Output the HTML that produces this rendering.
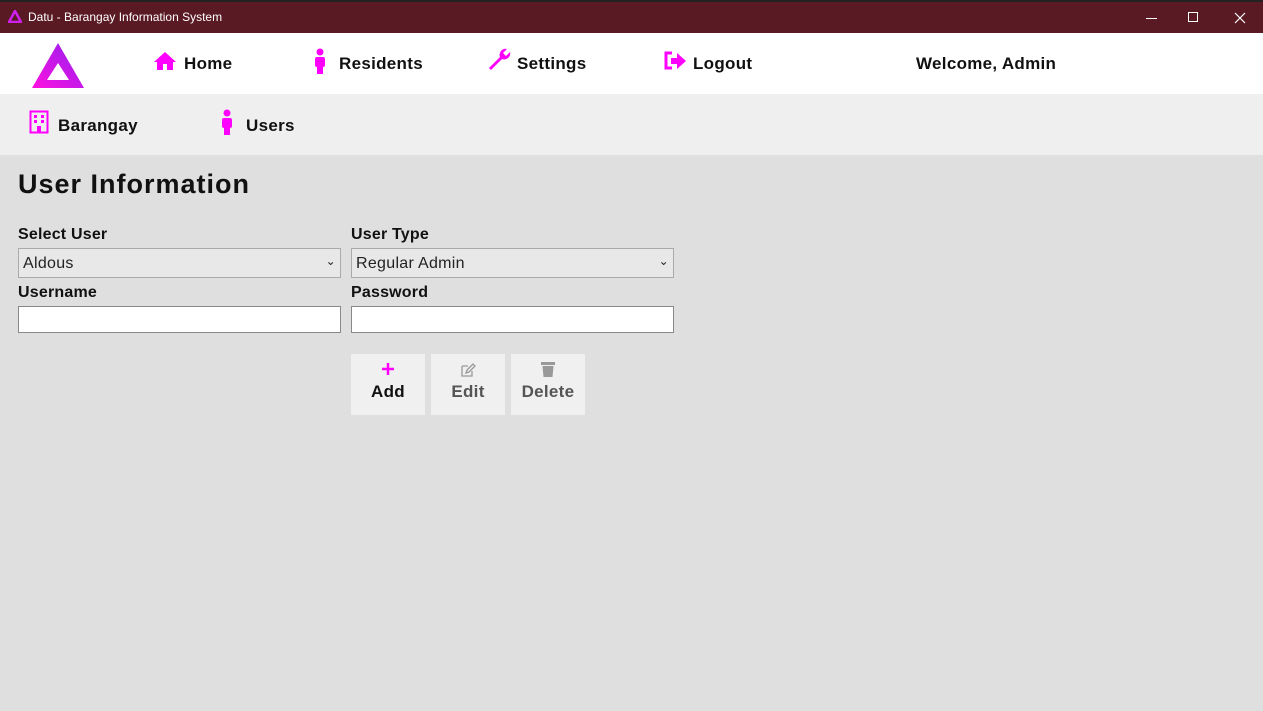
<!DOCTYPE html>
<html><head><style>
*{margin:0;padding:0;box-sizing:border-box}
body{width:1263px;height:711px;overflow:hidden;background:#dfdfdf;font-family:"Liberation Sans",sans-serif;position:relative}
.tb{position:absolute;left:0;top:0;width:1263px;height:33px;background:#5a1a24;border-top:2px solid #222;color:#fff;font-size:12px}
.a{position:absolute;white-space:nowrap}
.nav{position:absolute;top:33px;left:0;width:1263px;height:61px;background:#fff}
.sub{position:absolute;top:94px;left:0;width:1263px;height:61px;background:#efefef}
.n{font-size:17px;font-weight:bold;color:#111;letter-spacing:0.3px}
.lbl{font-size:16px;font-weight:bold;color:#111;letter-spacing:0.2px}
.sel{position:absolute;height:30px;width:323px;border:1px solid #aaa;background:#e8e8e8;font-size:16px;padding:6px 4px;color:#222;letter-spacing:0.3px}
.inp{position:absolute;height:27px;width:323px;border:1px solid #888;background:#fff}
.btn{position:absolute;top:354px;width:74px;height:61px;background:#f0f0f0;text-align:center;font-size:17px;font-weight:bold;letter-spacing:0.3px}
.btn .t{position:absolute;left:0;width:74px;top:28px}
</style></head><body>
<div class="tb">
<svg class="a" style="left:8px;top:8px" width="14" height="13"><polygon points="7,1 13,12 1,12" fill="none" stroke="#d020f0" stroke-width="2.5"/></svg>
<div class="a" style="left:28px;top:8px">Datu - Barangay Information System</div>
<div class="a" style="left:1146px;top:16px;width:11px;height:1px;background:#fff"></div>
<div class="a" style="left:1188px;top:10px;width:10px;height:10px;border:1px solid #fff"></div>
<svg class="a" style="left:1234px;top:10px" width="12" height="12"><path d="M1 1 L11 11 M11 1 L1 11" stroke="#fff" stroke-width="1.2"/></svg>
</div>
<div class="nav">
<svg class="a" style="left:32px;top:10px" width="52" height="45"><defs><linearGradient id="g" x1="0" y1="1" x2="1" y2="0"><stop offset="0" stop-color="#ff10e0"/><stop offset="1" stop-color="#9020f0"/></linearGradient></defs><path d="M26 0 L52 45 L0 45 Z M26 20 L15 37 L37 37 Z" fill="url(#g)" fill-rule="evenodd"/></svg>
<svg class="a" style="left:153px;top:18px" width="24" height="20"><path d="M12 1 L1 11 L4 11 L4 19 L10 19 L10 13 L14 13 L14 19 L20 19 L20 11 L23 11 Z" fill="#f0f"/></svg>
<div class="a n" style="left:184px;top:21px">Home</div>
<svg class="a" style="left:313px;top:15px" width="14" height="26"><circle cx="7" cy="4" r="3.5" fill="#f0f"/><rect x="2" y="9" width="10" height="10" rx="2" fill="#f0f"/><rect x="4" y="17" width="6" height="9" fill="#f0f"/></svg>
<div class="a n" style="left:339px;top:21px">Residents</div>
<svg class="a" style="left:487px;top:15px" width="24" height="24"><path d="M2 20 L13 9 A6 6 0 0 1 20 1 L16 5 L19 8 L23 4 A6 6 0 0 1 15 11 L4 22 Z" fill="#f0f"/></svg>
<div class="a n" style="left:517px;top:21px">Settings</div>
<svg class="a" style="left:663px;top:18px" width="24" height="20"><path d="M9 2 H3 V17 H9" fill="none" stroke="#f0f" stroke-width="3"/><path d="M8 7 H14 V2 L23 10 L14 18 V13 H8 Z" fill="#f0f"/></svg>
<div class="a n" style="left:693px;top:21px">Logout</div>
<div class="a n" style="left:916px;top:21px">Welcome, Admin</div>
</div>
<div class="sub">
<svg class="a" style="left:29px;top:16px" width="20" height="24"><rect x="1.5" y="1.5" width="17" height="21" fill="none" stroke="#f0f" stroke-width="2"/><g fill="#f0f"><rect x="5" y="5" width="3" height="3"/><rect x="12" y="5" width="3" height="3"/><rect x="5" y="10" width="3" height="3"/><rect x="12" y="10" width="3" height="3"/><rect x="8" y="16" width="4" height="6"/></g></svg>
<div class="a n" style="left:58px;top:22px">Barangay</div>
<svg class="a" style="left:220px;top:15px" width="14" height="26"><circle cx="7" cy="4" r="3.5" fill="#f0f"/><rect x="2" y="9" width="10" height="10" rx="2" fill="#f0f"/><rect x="4" y="17" width="6" height="9" fill="#f0f"/></svg>
<div class="a n" style="left:246px;top:22px">Users</div>
</div>
<div class="a" style="left:18px;top:169px;font-size:27px;font-weight:bold;color:#111;letter-spacing:1px">User Information</div>
<div class="a lbl" style="left:18px;top:226px">Select User</div>
<div class="a lbl" style="left:351px;top:226px">User Type</div>
<div class="sel" style="left:18px;top:248px">Aldous<span style="position:absolute;right:4px;top:5px;font-size:12px">&#8964;</span></div>
<div class="sel" style="left:351px;top:248px">Regular Admin<span style="position:absolute;right:4px;top:5px;font-size:12px">&#8964;</span></div>
<div class="a lbl" style="left:18px;top:284px">Username</div>
<div class="a lbl" style="left:351px;top:284px">Password</div>
<div class="inp" style="left:18px;top:306px"></div>
<div class="inp" style="left:351px;top:306px"></div>
<div class="btn" style="left:351px"><svg style="position:absolute;left:30px;top:8px" width="14" height="14"><path d="M7 1 V13 M1 7 H13" stroke="#f0f" stroke-width="2.5"/></svg><div class="t" style="color:#111">Add</div></div>
<div class="btn" style="left:431px"><svg style="position:absolute;left:29px;top:9px" width="16" height="14"><path d="M2 3 H8 M2 3 V13 H12 V8" fill="none" stroke="#999" stroke-width="1.3"/><path d="M6 10 L7 7 L13 1 L15 3 L9 9 Z" fill="none" stroke="#999" stroke-width="1.3"/></svg><div class="t" style="color:#555">Edit</div></div>
<div class="btn" style="left:511px"><svg style="position:absolute;left:30px;top:7px" width="14" height="16"><rect x="0" y="1" width="14" height="3" fill="#999"/><path d="M1.5 5 H12.5 L11.5 16 H2.5 Z" fill="#999"/></svg><div class="t" style="color:#555">Delete</div></div>
</body></html>
